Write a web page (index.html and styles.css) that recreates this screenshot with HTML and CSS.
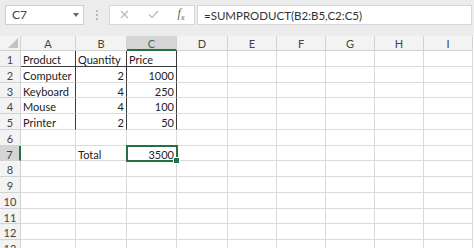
FILE: index.html
```html
<!DOCTYPE html>
<html lang="en">
<head>
    <meta charset="UTF-8">
    <meta name="viewport" content="width=device-width, initial-scale=1.0">
    <title>SUMPRODUCT</title>
    <link rel="stylesheet" href="styles.css">
</head>
<body>
    <!-- Name box and formula bar -->
    <div class="toolbar">
        <div class="name-box"><span>C7</span><span class="caret"></span></div>
        <div class="grip"></div>
        <div class="fx-buttons">
            <svg class="icon" width="9" height="9" viewBox="0 0 9 9"><path d="M1 1L8 8M8 1L1 8" stroke="#b8b8b8" stroke-width="1.2" fill="none"/></svg>
            <svg class="icon" width="11" height="9" viewBox="0 0 11 9"><path d="M1 4.5L4 7.5L10 1" stroke="#b8b8b8" stroke-width="1.2" fill="none"/></svg>
            <span class="fx">f<sub>x</sub></span>
        </div>
        <div class="formula">=SUMPRODUCT(B2:B5,C2:C5)</div>
    </div>

    <!-- Worksheet grid -->
    <div class="sheet">
        <div class="h corner"><span class="tri"></span></div>
        <div class="h">A</div>
        <div class="h">B</div>
        <div class="h hsel">C</div>
        <div class="h">D</div>
        <div class="h">E</div>
        <div class="h">F</div>
        <div class="h">G</div>
        <div class="h">H</div>
        <div class="h">I</div>

        <div class="rh">1</div>
        <div class="c br bb">Product</div><div class="c br bb">Quantity</div><div class="c br bb">Price</div>
        <div class="c"></div><div class="c"></div><div class="c"></div><div class="c"></div><div class="c"></div><div class="c"></div>

        <div class="rh">2</div>
        <div class="c br">Computer</div><div class="c br num">2</div><div class="c br num">1000</div>
        <div class="c"></div><div class="c"></div><div class="c"></div><div class="c"></div><div class="c"></div><div class="c"></div>

        <div class="rh">3</div>
        <div class="c br">Keyboard</div><div class="c br num">4</div><div class="c br num">250</div>
        <div class="c"></div><div class="c"></div><div class="c"></div><div class="c"></div><div class="c"></div><div class="c"></div>

        <div class="rh">4</div>
        <div class="c br">Mouse</div><div class="c br num">4</div><div class="c br num">100</div>
        <div class="c"></div><div class="c"></div><div class="c"></div><div class="c"></div><div class="c"></div><div class="c"></div>

        <div class="rh">5</div>
        <div class="c br">Printer</div><div class="c br num">2</div><div class="c br num">50</div>
        <div class="c"></div><div class="c"></div><div class="c"></div><div class="c"></div><div class="c"></div><div class="c"></div>

        <div class="rh">6</div>
        <div class="c"></div><div class="c"></div><div class="c"></div>
        <div class="c"></div><div class="c"></div><div class="c"></div><div class="c"></div><div class="c"></div><div class="c"></div>

        <div class="rh rsel">7</div>
        <div class="c"></div><div class="c">Total</div><div class="c num sel">3500</div>
        <div class="c"></div><div class="c"></div><div class="c"></div><div class="c"></div><div class="c"></div><div class="c"></div>

        <div class="rh">8</div>
        <div class="c"></div><div class="c"></div><div class="c"></div>
        <div class="c"></div><div class="c"></div><div class="c"></div><div class="c"></div><div class="c"></div><div class="c"></div>

        <div class="rh">9</div>
        <div class="c"></div><div class="c"></div><div class="c"></div>
        <div class="c"></div><div class="c"></div><div class="c"></div><div class="c"></div><div class="c"></div><div class="c"></div>

        <div class="rh">10</div>
        <div class="c"></div><div class="c"></div><div class="c"></div>
        <div class="c"></div><div class="c"></div><div class="c"></div><div class="c"></div><div class="c"></div><div class="c"></div>

        <div class="rh">11</div>
        <div class="c"></div><div class="c"></div><div class="c"></div>
        <div class="c"></div><div class="c"></div><div class="c"></div><div class="c"></div><div class="c"></div><div class="c"></div>

        <div class="rh">12</div>
        <div class="c"></div><div class="c"></div><div class="c"></div>
        <div class="c"></div><div class="c"></div><div class="c"></div><div class="c"></div><div class="c"></div><div class="c"></div>

        <div class="rh">13</div>
        <div class="c"></div><div class="c"></div><div class="c"></div>
        <div class="c"></div><div class="c"></div><div class="c"></div><div class="c"></div><div class="c"></div><div class="c"></div>
    </div>
</body>
</html>
```

FILE: styles.css
```css
/* Page */
body {
    margin: 0;
    width: 474px;
    height: 248px;
    overflow: hidden;
    background: #fff;
    font-family: 'Lato', 'Liberation Sans', sans-serif;
    font-size: 11px;
    color: #222;
}

/* Name box + formula bar */
.toolbar {
    display: flex;
    align-items: center;
    height: 36px;
    padding-bottom: 7px;
    box-sizing: border-box;
    background: #ececec;
}

.name-box {
    display: flex;
    align-items: center;
    margin-left: 5px;
    width: 79px;
    height: 20px;
    box-sizing: border-box;
    padding-left: 6px;
    background: #fff;
    border: 1px solid #cfcfcf;
    font-size: 12px;
    color: #444;
}

.caret {
    margin-left: auto;
    margin-right: 4px;
    border-top: 4px solid #666;
    border-left: 3px solid transparent;
    border-right: 3px solid transparent;
}

.grip {
    margin-left: 12px;
    height: 10px;
    border-left: 2px dotted #b8b8b8;
}

.fx-buttons {
    display: flex;
    align-items: center;
    justify-content: space-around;
    margin-left: 11px;
    width: 86px;
    height: 20px;
    box-sizing: border-box;
    background: #fff;
    border: 1px solid #d6d6d6;
}

.fx {
    font-family: 'Liberation Serif', serif;
    font-style: italic;
    font-size: 12px;
    color: #666;
}

.fx sub {
    font-size: 8px;
}

.formula {
    flex: 1;
    margin: 0 2px;
    height: 20px;
    box-sizing: border-box;
    padding-left: 6px;
    line-height: 19px;
    background: #fff;
    border: 1px solid #d6d6d6;
    font-size: 11.5px;
    color: #333;
}

/* Grid */
.sheet {
    display: grid;
    grid-template-columns: 21px 55px 51px 50px 51px 49px 49px 49px 49px 49px;
    grid-template-rows: 15px repeat(13, 15.75px);
}

.sheet > div {
    box-sizing: border-box;
    border-right: 1px solid #dadada;
    border-bottom: 1px solid #dadada;
    white-space: nowrap;
    overflow: hidden;
}

/* Column headers */
.h {
    background: #f3f3f3;
    border-color: #d2d2d2 !important;
    text-align: center;
    line-height: 15px;
    color: #444;
}

.corner {
    position: relative;
}

.tri {
    position: absolute;
    right: 2px;
    bottom: 2px;
    border-bottom: 10px solid #c2c2c2;
    border-left: 10px solid transparent;
}

.hsel {
    background: #d5d5d5;
    border-bottom: 2px solid #217346 !important;
    color: #3d6b50;
}

/* Row headers */
.rh {
    background: #f3f3f3;
    border-color: #d2d2d2 !important;
    text-align: center;
    padding-top: 2px;
    line-height: 13px;
    color: #444;
}

.rsel {
    background: #d5d5d5;
    border-right: 2px solid #217346 !important;
}

/* Cells */
.c {
    padding: 2px 2px 0;
    line-height: 13px;
}

.num {
    text-align: right;
}

.br {
    border-right-color: #3a3a3a !important;
}

.bb {
    border-bottom-color: #3a3a3a !important;
}

.sel {
    position: relative;
    overflow: visible !important;
    outline: 2px solid #217346;
    outline-offset: -1px;
}

.sel::after {
    content: "";
    position: absolute;
    right: -4px;
    bottom: -4px;
    width: 5px;
    height: 5px;
    background: #217346;
    border: 1px solid #fff;
}
```
